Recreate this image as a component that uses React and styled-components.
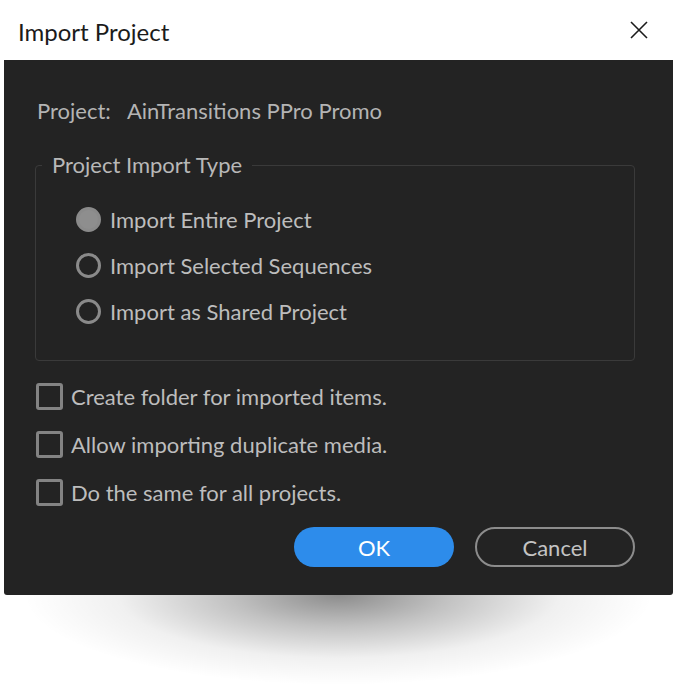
import React from "react";
import styled, { createGlobalStyle } from "styled-components";

const Global = createGlobalStyle`
  html, body { margin: 0; padding: 0; background: #ffffff; }
  body { font-family: Lato, "Noto Sans", sans-serif; }
`;

const Page = styled.div`
  width: 677px;
  height: 700px;
  background: #ffffff;
  padding: 0 4px;
  box-sizing: border-box;
`;

const Window = styled.div`
  display: flex;
  flex-direction: column;
`;

const TitleBar = styled.div`
  height: 60px;
  display: flex;
  align-items: center;
  justify-content: space-between;
  padding: 0 24px 0 14px;
  background: #ffffff;
`;

const Title = styled.div`
  font-family: Lato, "Noto Sans", sans-serif;
  font-size: 24px;
  color: #1b1b1b;
  margin-top: 2px;
`;

const CloseButton = styled.button`
  border: 0;
  background: transparent;
  padding: 0;
  width: 20px;
  height: 20px;
  display: flex;
  align-items: center;
  justify-content: center;
  cursor: pointer;
`;

const Panel = styled.div`
  position: relative;
  height: 535px;
  box-sizing: border-box;
  background: #232323;
  border-radius: 0 0 3px 3px;
  padding: 37px 38px 0 32px;
  display: flex;
  flex-direction: column;

  &::after {
    content: "";
    position: absolute;
    left: 3%;
    right: 3%;
    top: 100%;
    height: 90px;
    background: radial-gradient(
      ellipse 50% 100% at 50% 0%,
      rgba(0, 0, 0, 0.45) 0%,
      rgba(0, 0, 0, 0.24) 35%,
      rgba(0, 0, 0, 0.06) 70%,
      rgba(0, 0, 0, 0) 100%
    );
    pointer-events: none;
  }
`;

const ProjectLine = styled.div`
  font-size: 22px;
  line-height: 28px;
  color: #b4b4b4;
  padding-left: 1px;
  white-space: pre;
`;

const Group = styled.fieldset`
  margin: 28px 0 0 -1px;
  padding: 28px 0 35px 0;
  border: 1px solid #3a3a3a;
  border-radius: 4px;
  display: flex;
  flex-direction: column;
  gap: 18px;
  min-width: 0;
`;

const Legend = styled.legend`
  margin-left: 6px;
  padding: 0 10px;
  font-size: 22px;
  line-height: 24px;
  color: #b8b8b8;
`;

const OptionRow = styled.label`
  display: flex;
  align-items: center;
  gap: 9px;
  height: 28px;
  padding-left: 40px;
  font-size: 22px;
  color: #bdbdbd;
  cursor: pointer;
`;

const Radio = styled.span`
  width: 25px;
  height: 25px;
  box-sizing: border-box;
  border-radius: 50%;
  flex: none;
  border: 3px solid #8a8a8a;
  background: ${(p) => (p.$checked ? "#8e8e8e" : "transparent")};
`;

const Checks = styled.div`
  display: flex;
  flex-direction: column;
  gap: 20px;
  margin-top: 21px;
`;

const Checkbox = styled.span`
  width: 27px;
  height: 27px;
  box-sizing: border-box;
  border: 3px solid #838383;
  border-radius: 3px;
  flex: none;
`;

const CheckRow = styled.label`
  display: flex;
  align-items: center;
  gap: 8px;
  height: 28px;
  font-size: 22px;
  color: #bdbdbd;
  cursor: pointer;
`;

const Buttons = styled.div`
  display: flex;
  justify-content: flex-end;
  gap: 21px;
  margin-top: 21px;
`;

const Button = styled.button`
  width: 160px;
  height: 40px;
  border-radius: 20px;
  box-sizing: border-box;
  font-family: Lato, "Noto Sans", sans-serif;
  font-size: 22px;
  cursor: pointer;
  padding: 0;
  border: ${(p) => (p.$primary ? "0" : "2px solid #8c8c8c")};
  background: ${(p) => (p.$primary ? "#2d8ceb" : "transparent")};
  color: ${(p) => (p.$primary ? "#ffffff" : "#c4c4c4")};
`;

export default function App() {
  return (
    <Page>
      <Global />
      <Window>
        <TitleBar>
          <Title>Import Project</Title>
          <CloseButton aria-label="Close">
            <svg width="18" height="18" viewBox="0 0 18 18">
              <path d="M1 1 L17 17 M17 1 L1 17" stroke="#1b1b1b" strokeWidth="1.6" fill="none" />
            </svg>
          </CloseButton>
        </TitleBar>
        <Panel>
          <ProjectLine>{"Project:   AinTransitions PPro Promo"}</ProjectLine>
          <Group>
            <Legend>Project Import Type</Legend>
            <OptionRow>
              <Radio $checked />
              Import Entire Project
            </OptionRow>
            <OptionRow>
              <Radio />
              Import Selected Sequences
            </OptionRow>
            <OptionRow>
              <Radio />
              Import as Shared Project
            </OptionRow>
          </Group>
          <Checks>
            <CheckRow>
              <Checkbox />
              Create folder for imported items.
            </CheckRow>
            <CheckRow>
              <Checkbox />
              Allow importing duplicate media.
            </CheckRow>
            <CheckRow>
              <Checkbox />
              Do the same for all projects.
            </CheckRow>
          </Checks>
          <Buttons>
            <Button $primary>OK</Button>
            <Button>Cancel</Button>
          </Buttons>
        </Panel>
      </Window>
    </Page>
  );
}
